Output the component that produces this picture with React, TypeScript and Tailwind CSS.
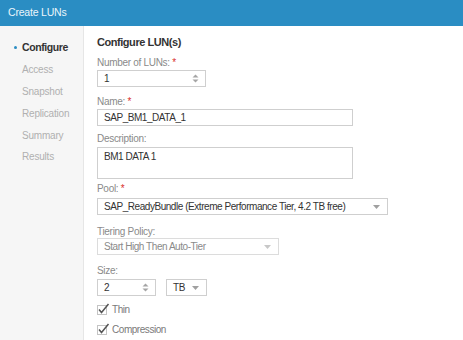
import React from 'react';

const steps = ['Configure', 'Access', 'Snapshot', 'Replication', 'Summary', 'Results'];

const Stepper: React.FC = () => (
  <svg width="7" height="9" viewBox="0 0 7 9" className="shrink-0">
    <path d="M3.5 0.5 L6.5 3.5 L0.5 3.5 Z" fill="#a5a5a5" />
    <path d="M0.5 5.5 L6.5 5.5 L3.5 8.5 Z" fill="#a5a5a5" />
  </svg>
);

const Caret: React.FC<{ color?: string }> = ({ color = '#a0a0a0' }) => (
  <svg width="7" height="4" viewBox="0 0 7 4" className="shrink-0">
    <path d="M0 0 L7 0 L3.5 4 Z" fill={color} />
  </svg>
);

const Check: React.FC = () => (
  <svg width="13" height="12" viewBox="0 0 13 12" className="shrink-0">
    <rect x="0.5" y="2.5" width="9" height="9" fill="#fff" stroke="#c4c4c4" />
    <path d="M2 6.5 L4.5 9.5 L11.5 1" fill="none" stroke="#555" strokeWidth="1.5" />
  </svg>
);

const Label: React.FC<{ text: string; req?: boolean }> = ({ text, req }) => (
  <div className="h-[12px] text-[10px] leading-[12px] tracking-[-0.3px] text-[#8a8a8a] whitespace-nowrap">
    {text}
    {req && <span className="text-[#d9302c]"> *</span>}
  </div>
);

export default function App() {
  return (
    <div className="w-[463px] h-[340px] flex flex-col bg-white overflow-hidden font-['Liberation_Sans',Arial,sans-serif]">
      <div className="h-[26px] shrink-0 bg-[#2a8dc3] flex items-center px-[8px] text-[10.5px] tracking-[-0.2px] text-[#eaf5fb]">
        Create LUNs
      </div>
      <div className="flex flex-1">
        <div className="w-[84px] shrink-0 bg-[#f6f6f6] border-r border-[#e6e6e6] pt-[11px]">
          {steps.map((s, i) => (
            <div key={s} className="h-[21.8px] flex items-center pl-[14px]">
              <span className={`w-[3px] h-[3px] rounded-full mr-[5px] ${i === 0 ? 'bg-[#2a8dc3]' : 'bg-transparent'}`} />
              <span
                className={
                  i === 0
                    ? 'font-bold text-[#333] text-[10.5px] tracking-[-0.4px]'
                    : 'text-[#b0b0b0] text-[10px] tracking-[-0.2px]'
                }
              >
                {s}
              </span>
            </div>
          ))}
        </div>
        <div className="flex-1 pl-[13px] pt-[9px] text-[10px] tracking-[-0.45px]">
          <div className="text-[11px] leading-[14px] font-bold text-[#333]">Configure LUN(s)</div>

          <div className="mt-[8px]">
            <Label text="Number of LUNs:" req />
            <div className="mt-[1px] w-[109px] h-[17px] border border-[#cfcfcf] flex items-center justify-between pl-[6px] pr-[6px] text-[#333]">
              <span>1</span>
              <Stepper />
            </div>
          </div>

          <div className="mt-[9px]">
            <Label text="Name:" req />
            <div className="mt-[1px] w-[256px] h-[17px] border border-[#cfcfcf] flex items-center pl-[6px] text-[#333]">
              SAP_BM1_DATA_1
            </div>
          </div>

          <div className="mt-[7px]">
            <Label text="Description:" />
            <div className="mt-[2px] w-[256px] h-[32px] border border-[#cfcfcf] pl-[6px] pt-[3px] leading-[12px] text-[#333]">
              BM1 DATA 1
            </div>
          </div>

          <div className="mt-[4px]">
            <Label text="Pool:" req />
            <div className="mt-[3px] w-[291px] h-[17px] border border-[#cfcfcf] flex items-center justify-between pl-[6px] pr-[7px] text-[#333]">
              <span className="whitespace-nowrap">SAP_ReadyBundle (Extreme Performance Tier, 4.2 TB free)</span>
              <Caret />
            </div>
          </div>

          <div className="mt-[11px]">
            <Label text="Tiering Policy:" />
            <div className="mt-0 w-[182px] h-[17px] border border-[#dcdcdc] flex items-center justify-between pl-[6px] pr-[7px] text-[#8a8a8a]">
              <span className="whitespace-nowrap">Start High Then Auto-Tier</span>
              <Caret color="#c8c8c8" />
            </div>
          </div>

          <div className="mt-[10px]">
            <Label text="Size:" />
            <div className="mt-[2px] flex gap-[10px]">
              <div className="w-[59px] h-[17px] border border-[#cfcfcf] flex items-center justify-between pl-[6px] pr-[6px] text-[#333]">
                <span>2</span>
                <Stepper />
              </div>
              <div className="w-[41px] h-[17px] border border-[#cfcfcf] flex items-center justify-between pl-[6px] pr-[7px] text-[#333]">
                <span>TB</span>
                <Caret />
              </div>
            </div>
          </div>

          <div className="mt-[7px] h-[12px] flex items-center gap-[2px] text-[#7a7a7a]">
            <Check />
            <span>Thin</span>
          </div>
          <div className="mt-[8px] h-[12px] flex items-center gap-[2px] text-[#7a7a7a]">
            <Check />
            <span>Compression</span>
          </div>
        </div>
      </div>
    </div>
  );
}
